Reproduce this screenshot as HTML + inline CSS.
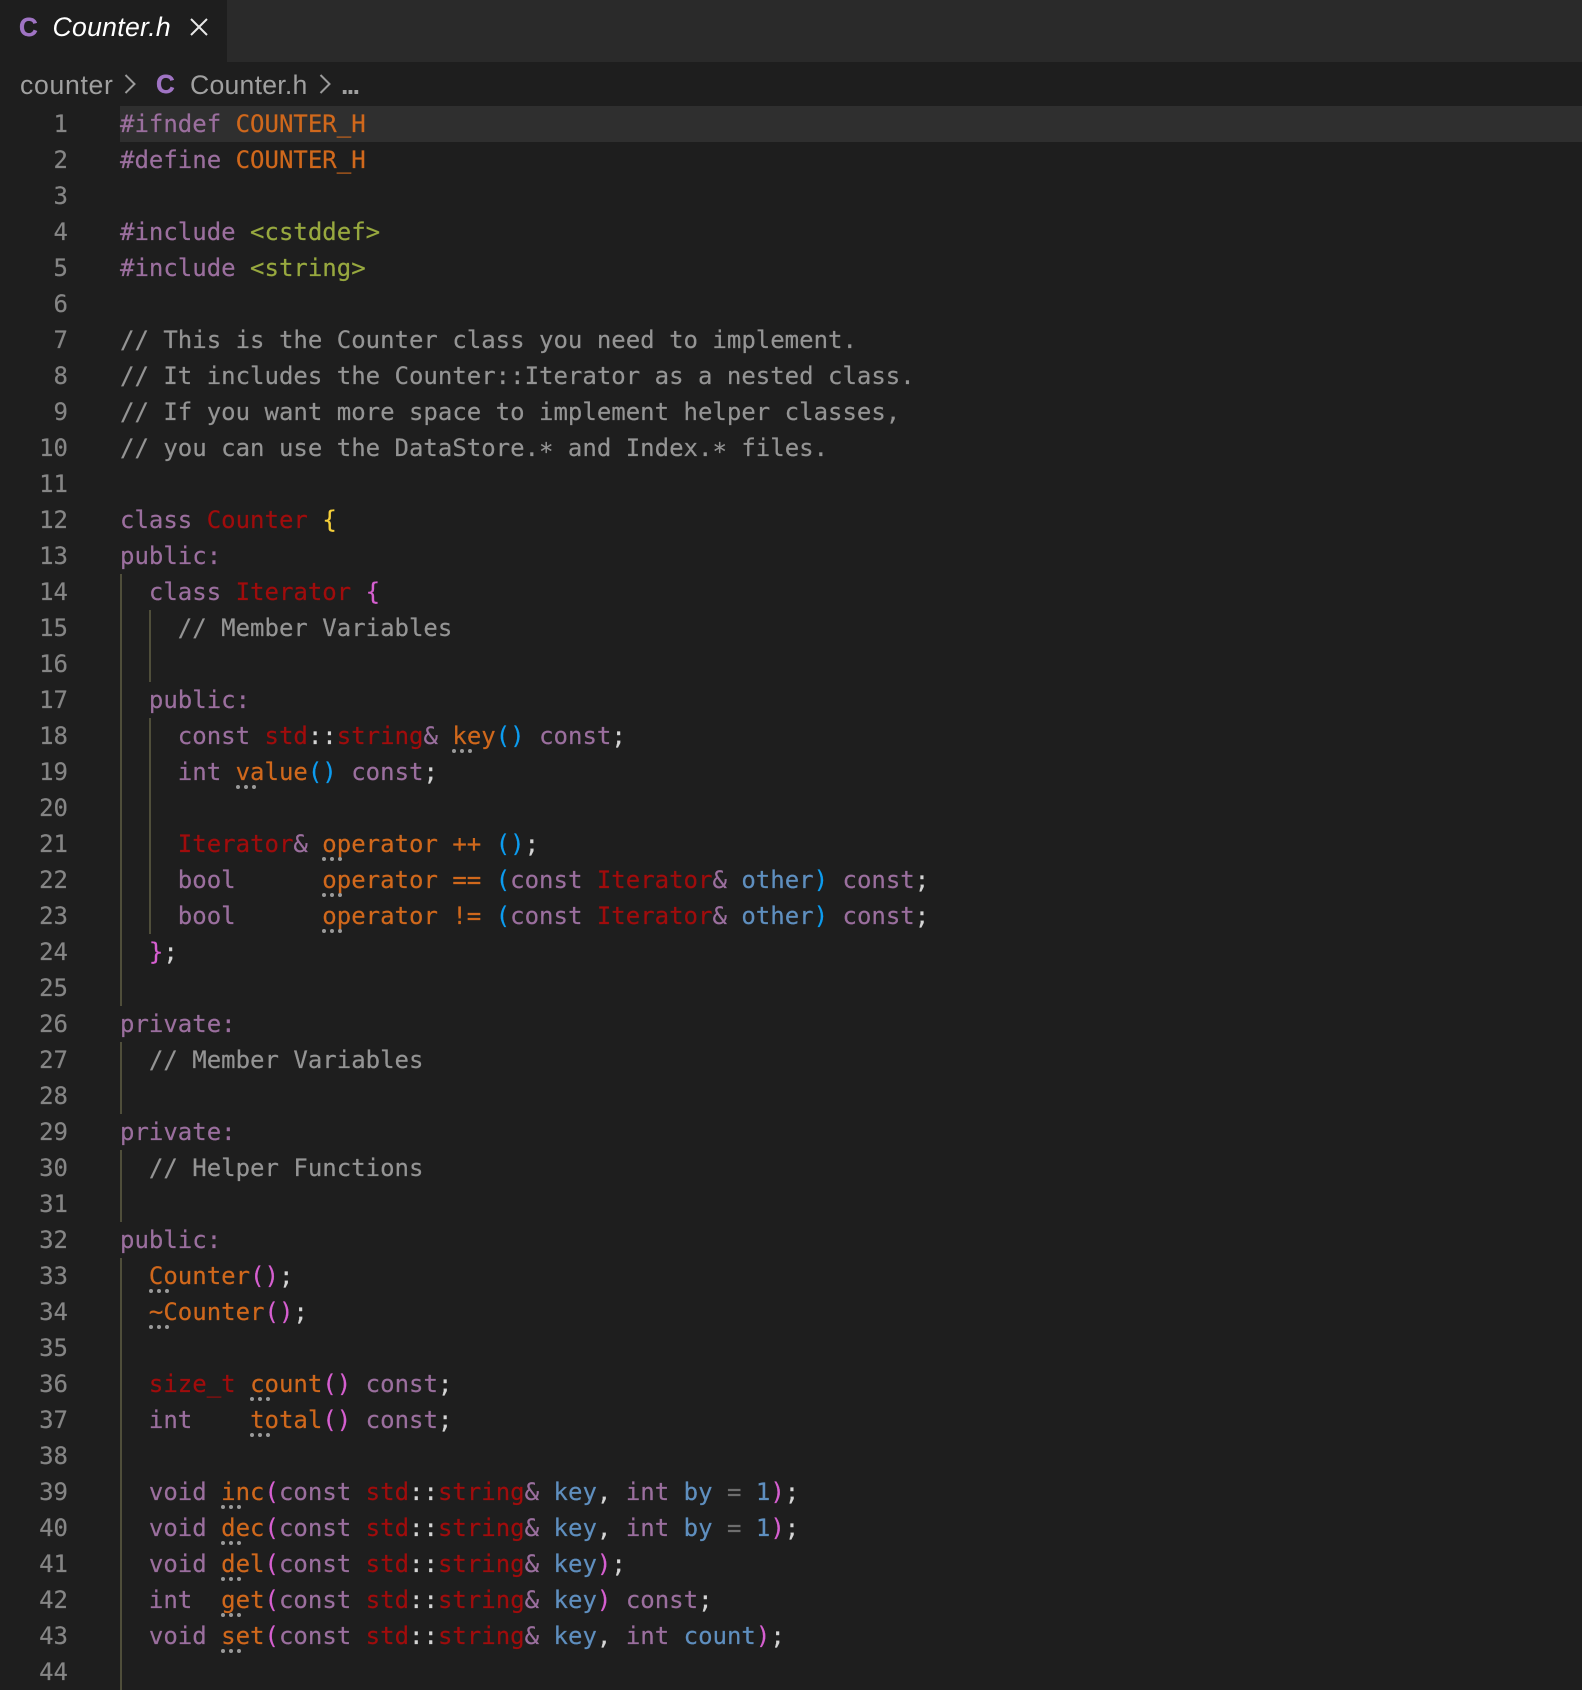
<!DOCTYPE html>
<html><head><meta charset="utf-8"><title>Counter.h</title>
<style>
html,body{margin:0;padding:0;background:#1e1e1e;}
body{width:1582px;height:1690px;position:relative;overflow:hidden;font-family:"Liberation Sans",sans-serif;}
.tabbar{position:absolute;left:227px;top:0;width:1355px;height:62px;background:#2a2a2a;}
.abs{position:absolute;white-space:pre;}
.ln{position:absolute;left:0;width:68px;text-align:right;height:36px;color:#858585;font:24px/36px "DejaVu Sans Mono",monospace;-webkit-text-stroke:.2px;}
.l{position:absolute;left:120px;height:36px;white-space:pre;color:#d4d4d4;font:24px/36px "DejaVu Sans Mono",monospace;-webkit-text-stroke:.2px;}
.hl{position:absolute;left:120px;top:106px;width:1462px;height:36px;background:#2f2f2f;}
.g{position:absolute;width:2px;background:#4f4e3a;}
.k{color:#9b6f9e}.o{color:#d0681c}.s{color:#98a93f}.c{color:#949494}.t{color:#a00c0c}.b{color:#0c9cf0}.p{color:#d65fd0}.y{color:#f5cf3a}.v{color:#5f8fbf}.a{color:#9b6f9e}.e{color:#6f6f6f}
.st{position:relative;top:4px;}
.f{color:#d0681c;position:relative;}
.f::after{content:"";position:absolute;left:0;top:27px;width:4px;height:4px;border-radius:50%;background:#9a9a9a;box-shadow:8px 0 0 #9a9a9a,16px 0 0 #9a9a9a;}
</style></head><body>
<div class="tabbar"></div>
<div class="abs" style="left:19px;top:11px;font:bold 26px/32px 'Liberation Sans',sans-serif;color:#a074c4;-webkit-text-stroke:.4px #a074c4">C</div>
<div class="abs" style="left:52.5px;top:11px;font:italic 26.6px/32px 'Liberation Sans',sans-serif;color:#ffffff;letter-spacing:.3px">Counter.h</div>
<svg class="abs" style="left:189px;top:17px" width="20" height="20" viewBox="0 0 20 20"><path d="M2 2L18 18M18 2L2 18" stroke="#e8e8e8" stroke-width="2" fill="none"/></svg>
<div class="abs" style="left:20px;top:69px;font:26.6px/32px 'Liberation Sans',sans-serif;color:#a0a0a0;letter-spacing:.7px">counter</div>
<svg class="abs" style="left:123px;top:73px" width="14" height="22" viewBox="0 0 14 22"><path d="M2.5 2L11.5 11L2.5 20" stroke="#9a9a9a" stroke-width="2" fill="none"/></svg>
<div class="abs" style="left:156px;top:68px;font:bold 26px/32px 'Liberation Sans',sans-serif;color:#a074c4;-webkit-text-stroke:.4px #a074c4">C</div>
<div class="abs" style="left:190px;top:69px;font:26.6px/32px 'Liberation Sans',sans-serif;color:#a0a0a0;letter-spacing:.25px">Counter.h</div>
<svg class="abs" style="left:318px;top:73px" width="14" height="22" viewBox="0 0 14 22"><path d="M2.5 2L11.5 11L2.5 20" stroke="#9a9a9a" stroke-width="2" fill="none"/></svg>
<div class="abs" style="left:341px;top:69px;font:bold 26.6px/32px 'Liberation Sans',sans-serif;color:#a0a0a0;letter-spacing:-1.6px">...</div>
<div class="hl"></div>
<div class="g" style="left:120px;top:574px;height:432px"></div>
<div class="g" style="left:120px;top:1042px;height:72px"></div>
<div class="g" style="left:120px;top:1150px;height:72px"></div>
<div class="g" style="left:120px;top:1258px;height:432px"></div>
<div class="g" style="left:149px;top:610px;height:72px"></div>
<div class="g" style="left:149px;top:718px;height:216px"></div>
<div class="ln" style="top:106px">1</div>
<div class="ln" style="top:142px">2</div>
<div class="ln" style="top:178px">3</div>
<div class="ln" style="top:214px">4</div>
<div class="ln" style="top:250px">5</div>
<div class="ln" style="top:286px">6</div>
<div class="ln" style="top:322px">7</div>
<div class="ln" style="top:358px">8</div>
<div class="ln" style="top:394px">9</div>
<div class="ln" style="top:430px">10</div>
<div class="ln" style="top:466px">11</div>
<div class="ln" style="top:502px">12</div>
<div class="ln" style="top:538px">13</div>
<div class="ln" style="top:574px">14</div>
<div class="ln" style="top:610px">15</div>
<div class="ln" style="top:646px">16</div>
<div class="ln" style="top:682px">17</div>
<div class="ln" style="top:718px">18</div>
<div class="ln" style="top:754px">19</div>
<div class="ln" style="top:790px">20</div>
<div class="ln" style="top:826px">21</div>
<div class="ln" style="top:862px">22</div>
<div class="ln" style="top:898px">23</div>
<div class="ln" style="top:934px">24</div>
<div class="ln" style="top:970px">25</div>
<div class="ln" style="top:1006px">26</div>
<div class="ln" style="top:1042px">27</div>
<div class="ln" style="top:1078px">28</div>
<div class="ln" style="top:1114px">29</div>
<div class="ln" style="top:1150px">30</div>
<div class="ln" style="top:1186px">31</div>
<div class="ln" style="top:1222px">32</div>
<div class="ln" style="top:1258px">33</div>
<div class="ln" style="top:1294px">34</div>
<div class="ln" style="top:1330px">35</div>
<div class="ln" style="top:1366px">36</div>
<div class="ln" style="top:1402px">37</div>
<div class="ln" style="top:1438px">38</div>
<div class="ln" style="top:1474px">39</div>
<div class="ln" style="top:1510px">40</div>
<div class="ln" style="top:1546px">41</div>
<div class="ln" style="top:1582px">42</div>
<div class="ln" style="top:1618px">43</div>
<div class="ln" style="top:1654px">44</div>
<div class="l" style="top:106px"><span class="k">#ifndef</span> <span class="o">COUNTER_H</span></div>
<div class="l" style="top:142px"><span class="k">#define</span> <span class="o">COUNTER_H</span></div>
<div class="l" style="top:214px"><span class="k">#include</span> <span class="s">&lt;cstddef&gt;</span></div>
<div class="l" style="top:250px"><span class="k">#include</span> <span class="s">&lt;string&gt;</span></div>
<div class="l" style="top:322px"><span class="c">// This is the Counter class you need to implement.</span></div>
<div class="l" style="top:358px"><span class="c">// It includes the Counter::Iterator as a nested class.</span></div>
<div class="l" style="top:394px"><span class="c">// If you want more space to implement helper classes,</span></div>
<div class="l" style="top:430px"><span class="c">// you can use the DataStore.<span class="st">*</span> and Index.<span class="st">*</span> files.</span></div>
<div class="l" style="top:502px"><span class="k">class</span> <span class="t">Counter</span> <span class="y">{</span></div>
<div class="l" style="top:538px"><span class="k">public:</span></div>
<div class="l" style="top:574px">  <span class="k">class</span> <span class="t">Iterator</span> <span class="p">{</span></div>
<div class="l" style="top:610px">    <span class="c">// Member Variables</span></div>
<div class="l" style="top:682px">  <span class="k">public:</span></div>
<div class="l" style="top:718px">    <span class="k">const</span> <span class="t">std</span>::<span class="t">string</span><span class="a">&amp;</span> <span class="f">key</span><span class="b">()</span> <span class="k">const</span>;</div>
<div class="l" style="top:754px">    <span class="k">int</span> <span class="f">value</span><span class="b">()</span> <span class="k">const</span>;</div>
<div class="l" style="top:826px">    <span class="t">Iterator</span><span class="a">&amp;</span> <span class="f">operator</span><span class="o"> ++ </span><span class="b">()</span>;</div>
<div class="l" style="top:862px">    <span class="k">bool</span>      <span class="f">operator</span><span class="o"> == </span><span class="b">(</span><span class="k">const</span> <span class="t">Iterator</span><span class="a">&amp;</span> <span class="v">other</span><span class="b">)</span> <span class="k">const</span>;</div>
<div class="l" style="top:898px">    <span class="k">bool</span>      <span class="f">operator</span><span class="o"> != </span><span class="b">(</span><span class="k">const</span> <span class="t">Iterator</span><span class="a">&amp;</span> <span class="v">other</span><span class="b">)</span> <span class="k">const</span>;</div>
<div class="l" style="top:934px">  <span class="p">}</span>;</div>
<div class="l" style="top:1006px"><span class="k">private:</span></div>
<div class="l" style="top:1042px">  <span class="c">// Member Variables</span></div>
<div class="l" style="top:1114px"><span class="k">private:</span></div>
<div class="l" style="top:1150px">  <span class="c">// Helper Functions</span></div>
<div class="l" style="top:1222px"><span class="k">public:</span></div>
<div class="l" style="top:1258px">  <span class="f">Counter</span><span class="p">()</span>;</div>
<div class="l" style="top:1294px">  <span class="f">~Counter</span><span class="p">()</span>;</div>
<div class="l" style="top:1366px">  <span class="t">size_t</span> <span class="f">count</span><span class="p">()</span> <span class="k">const</span>;</div>
<div class="l" style="top:1402px">  <span class="k">int</span>    <span class="f">total</span><span class="p">()</span> <span class="k">const</span>;</div>
<div class="l" style="top:1474px">  <span class="k">void</span> <span class="f">inc</span><span class="p">(</span><span class="k">const</span> <span class="t">std</span>::<span class="t">string</span><span class="a">&amp;</span> <span class="v">key</span>, <span class="k">int</span> <span class="v">by</span> <span class="e">=</span> <span class="v">1</span><span class="p">)</span>;</div>
<div class="l" style="top:1510px">  <span class="k">void</span> <span class="f">dec</span><span class="p">(</span><span class="k">const</span> <span class="t">std</span>::<span class="t">string</span><span class="a">&amp;</span> <span class="v">key</span>, <span class="k">int</span> <span class="v">by</span> <span class="e">=</span> <span class="v">1</span><span class="p">)</span>;</div>
<div class="l" style="top:1546px">  <span class="k">void</span> <span class="f">del</span><span class="p">(</span><span class="k">const</span> <span class="t">std</span>::<span class="t">string</span><span class="a">&amp;</span> <span class="v">key</span><span class="p">)</span>;</div>
<div class="l" style="top:1582px">  <span class="k">int</span>  <span class="f">get</span><span class="p">(</span><span class="k">const</span> <span class="t">std</span>::<span class="t">string</span><span class="a">&amp;</span> <span class="v">key</span><span class="p">)</span> <span class="k">const</span>;</div>
<div class="l" style="top:1618px">  <span class="k">void</span> <span class="f">set</span><span class="p">(</span><span class="k">const</span> <span class="t">std</span>::<span class="t">string</span><span class="a">&amp;</span> <span class="v">key</span>, <span class="k">int</span> <span class="v">count</span><span class="p">)</span>;</div>
</body></html>
